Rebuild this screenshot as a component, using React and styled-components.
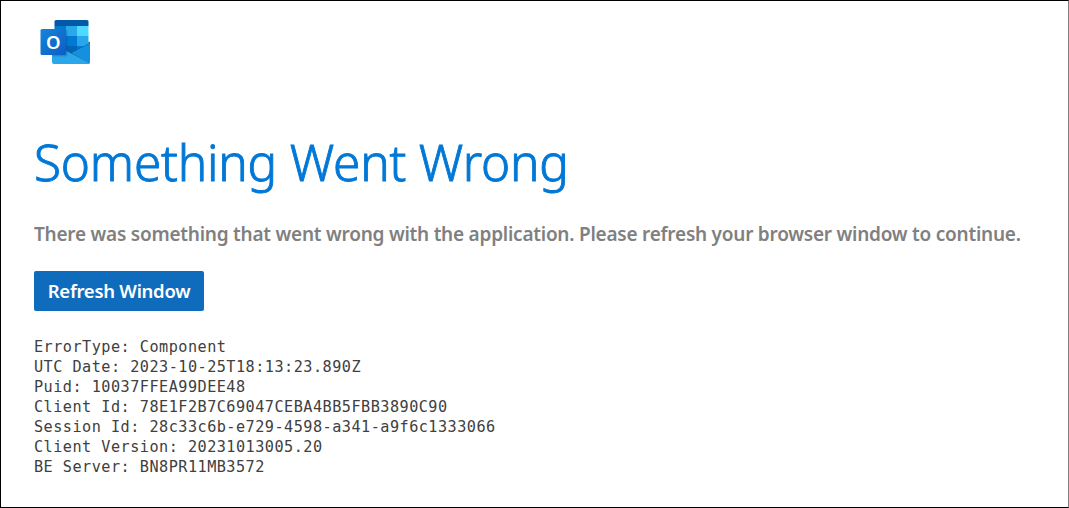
import React from 'react'

import styled, {createGlobalStyle} from "styled-components";

const GlobalStyle = createGlobalStyle`
  * {
    box-sizing: border-box;
  }

  body {
    margin: 0;
    background-color: #ffffff;
    font-family: "Noto Sans", "Open Sans", sans-serif;
  }
`

const Page = styled.main`
  width: 100%;
  height: 100vh;
  display: flex;
  overflow: hidden;
  align-items: flex-start;
  flex-direction: column;
  padding: 18px 33px 0;
  border: 1px solid #000000;
  border-right-color: #808080;
`

const Logo = styled.svg`
  width: 52px;
  height: 48px;
  flex: none;
  display: block;
  margin-left: 5px;
`

const LogoLetter = styled.text`
  fill: #ffffff;
  font-size: 18.5px;
  font-weight: 600;
  font-family: "Noto Sans", sans-serif;
`

const Title = styled.h1`
  margin: 61px 0 0;
  color: #0078d7;
  font-size: 49.5px;
  font-weight: 300;
  line-height: 68px;
  white-space: nowrap;
  letter-spacing: -0.2px;
  -webkit-text-stroke: 0.9px #0078d7;
`

const Message = styled.p`
  margin: 24px 0 0;
  color: #808080;
  font-size: 19px;
  font-weight: 600;
  line-height: 28px;
  white-space: nowrap;
  letter-spacing: -0.235px;
`

const RefreshButton = styled.button`
  width: 170px;
  height: 40px;
  border: 0;
  padding: 0;
  flex: none;
  margin-top: 23px;
  color: #ffffff;
  cursor: pointer;
  font-size: 18.5px;
  font-weight: 600;
  font-family: inherit;
  line-height: 40px;
  border-radius: 2px;
  letter-spacing: -0.28px;
  background-color: #0f6cbd;
`

const Details = styled.div`
  margin-top: 26px;
  color: #404040;
  font-size: 15.2px;
  line-height: 20px;
  white-space: pre;
  font-family: "DejaVu Sans Mono", monospace;
  letter-spacing: 0.475px;
`

const DetailRow = styled.div``

const details = [
  {label: 'ErrorType', value: 'Component'},
  {label: 'UTC Date', value: '2023-10-25T18:13:23.890Z'},
  {label: 'Puid', value: '10037FFEA99DEE48'},
  {label: 'Client Id', value: '78E1F2B7C69047CEBA4BB5FBB3890C90'},
  {label: 'Session Id', value: '28c33c6b-e729-4598-a341-a9f6c1333066'},
  {label: 'Client Version', value: '20231013005.20'},
  {label: 'BE Server', value: 'BN8PR11MB3572'},
]

const OutlookLogo = () => (
  <Logo viewBox="0 0 52 48" role="img" aria-label="Outlook">
    <defs>
      <linearGradient id="tile" x1="0" y1="0" x2="1" y2="1">
        <stop offset="0" stopColor="#1784d9"/>
        <stop offset="1" stopColor="#0b5dc4"/>
      </linearGradient>
    </defs>
    {/* calendar */}
    <path d="M17 1h31a1.500 1.500 0 0 1 1.500 1.500V7H15.500V2.500A1.500 1.500 0 0 1 17 1z" fill="#0358a7"/>
    <path d="M15.500 7H27v10H15.500z" fill="#0078d4"/>
    <path d="M27 7h11v10H27z" fill="#28a8ea"/>
    <path d="M38 7h11.500v10H38z" fill="#50d9ff"/>
    <path d="M15.500 17H27v18H15.500z" fill="#0a64b8"/>
    <path d="M27 17h11v10H27z" fill="#0078d4"/>
    <path d="M38 17h11.500v10H38z" fill="#28a8ea"/>
    <path d="M27 27h11v8H27z" fill="#0364b8"/>
    <path d="M38 27h11.500v8H38z" fill="#0078d4"/>
    {/* envelope */}
    <path d="M49.500 22.500l1.500.8V26L33 35.500l-6-3v-1.500l6 2.500 16.500-9z" fill="#14518f"/>
    <path d="M51 24.300V43L33 34.300z" fill="#1490df"/>
    <path d="M13 28l14 3.500 23.800 12.700A2 2 0 0 1 49 45H15a2 2 0 0 1-2-2z" fill="#28a8ea"/>
    <path d="M51 24.300V44L32 34.300z" fill="#1490df"/>
    <path d="M27 31.300L50.600 44.100" stroke="#1169b0" strokeWidth="0.8" fill="none"/>
    {/* letter tile with its shadow */}
    <rect x="13" y="11" width="15.500" height="26.500" rx="2" fill="#083a6d" fillOpacity="0.25"/>
    <rect x="1.500" y="10" width="25.500" height="26" rx="1.500" fill="url(#tile)"/>
    <LogoLetter x="14.200" y="29.700" textAnchor="middle">O</LogoLetter>
  </Logo>
)

const App = () => {
  const handleRefresh = () => window.location.reload();

  return (
    <>
      <GlobalStyle/>
      <Page>
        <OutlookLogo/>
        <Title>Something Went Wrong</Title>
        <Message>
          There was something that went wrong with the application. Please refresh your browser window to continue.
        </Message>
        <RefreshButton type="button" onClick={handleRefresh}>Refresh Window</RefreshButton>
        <Details>
          {details.map(({label, value}) => (
            <DetailRow key={label}>{`${label}: ${value}`}</DetailRow>
          ))}
        </Details>
      </Page>
    </>
  );
}
export default App
